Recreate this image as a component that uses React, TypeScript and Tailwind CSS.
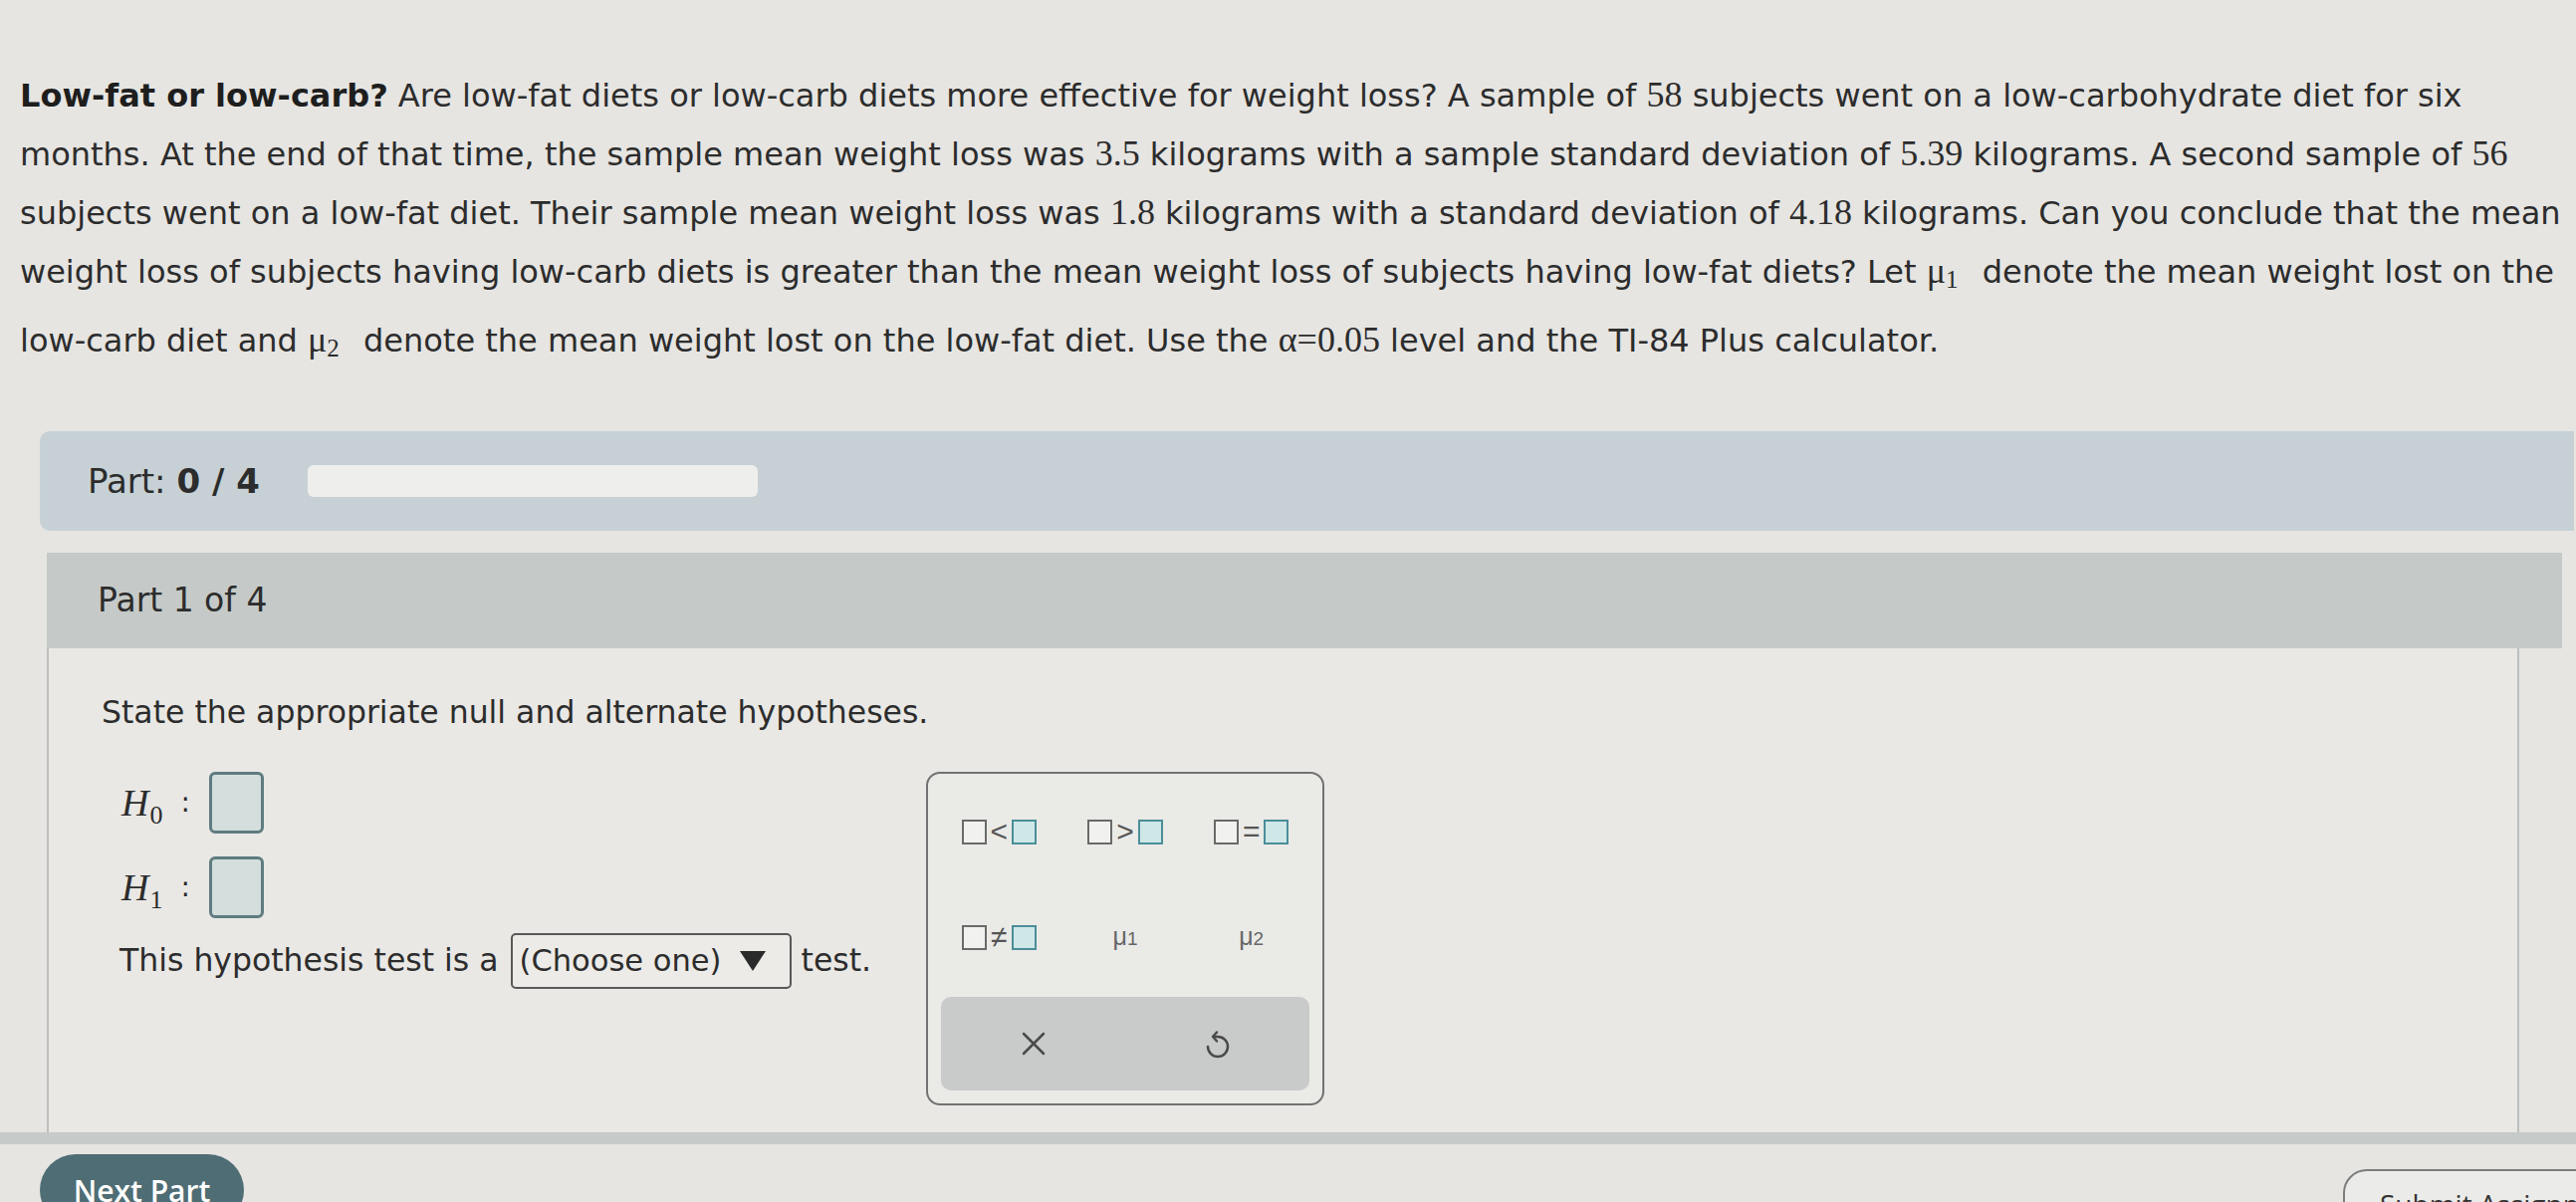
import React from 'react';

const serif = "font-['Liberation_Serif',serif]";

function Num({ children }: { children: React.ReactNode }) {
  return <span className={`${serif} text-[36px]`}>{children}</span>;
}

function Mu({ sub }: { sub: string }) {
  return (
    <span className={`${serif} text-[36px]`}>
      μ<sub className="text-[25px] relative top-[5px] mr-[14px]">{sub}</sub>
    </span>
  );
}

function Sq({ filled }: { filled?: boolean }) {
  return filled ? (
    <span className="inline-block w-[25px] h-[25px] border-2 border-[#4b8e98] bg-[#cfe7e7]" />
  ) : (
    <span className="inline-block w-[25px] h-[25px] border-2 border-[#6a6a6a] bg-[#f1f1ef]" />
  );
}

function Relation({ sym }: { sym: string }) {
  return (
    <div className="flex items-center justify-center gap-[4px] text-[#555] text-[30px] font-['Liberation_Sans',sans-serif]">
      <Sq />
      <span className="leading-none">{sym}</span>
      <Sq filled />
    </div>
  );
}

function AnswerBox() {
  return <span className="inline-block w-[55px] h-[62px] rounded-[6px] border-[3px] border-[#5f7c80] bg-[#d3dedd]" />;
}

function HLabel({ sub }: { sub: string }) {
  return (
    <div className="w-[90px] flex items-center pl-[2px]">
      <span className={`${serif} italic text-[38px]`}>H</span>
      <span className={`${serif} text-[26px] relative top-[12px] ml-[1px]`}>{sub}</span>
      <span className="ml-[18px] text-[28px]">:</span>
    </div>
  );
}

export default function App() {
  return (
    <div className="w-[2587px] h-[1207px] overflow-hidden bg-[#e6e5e2] text-[#2c2c2c] font-['DejaVu_Sans',sans-serif]">
      {/* problem statement */}
      <div className="pl-[20px] pt-[66px] text-[32px] leading-[58px] whitespace-nowrap">
        <div>
          <b className="text-[#1e1e1e]">Low-fat or low-carb?</b> Are low-fat diets or low-carb diets more effective for weight loss? A sample of <Num>58</Num> subjects went on a low-carbohydrate diet for six
        </div>
        <div>
          months. At the end of that time, the sample mean weight loss was <Num>3.5</Num> kilograms with a sample standard deviation of <Num>5.39</Num> kilograms. A second sample of <Num>56</Num>
        </div>
        <div>
          subjects went on a low-fat diet. Their sample mean weight loss was <Num>1.8</Num> kilograms with a standard deviation of <Num>4.18</Num> kilograms. Can you conclude that the mean
        </div>
        <div>
          weight loss of subjects having low-carb diets is greater than the mean weight loss of subjects having low-fat diets? Let <Mu sub="1" /> denote the mean weight lost on the
        </div>
        <div className="mt-[10px]">
          low-carb diet and <Mu sub="2" /> denote the mean weight lost on the low-fat diet. Use the <Num>α=0.05</Num> level and the TI-84 Plus calculator.
        </div>
      </div>

      {/* progress */}
      <div className="ml-[40px] mr-[2px] mt-[62px] h-[100px] rounded-l-[10px] bg-[#c7d1d5] flex items-center pl-[48px] text-[34px]">
        <span>
          Part: <b>0 / 4</b>
        </span>
        <div className="ml-[48px] w-[452px] h-[32px] rounded-[6px] bg-[#eeeeec]" />
      </div>

      {/* part panel */}
      <div className="ml-[47px] mr-[57px] mt-[22px] h-[582px] border-x-2 border-[#bcbfbe] bg-[#e9e8e5]">
        <div className="-ml-[2px] -mr-[45px] h-[96px] bg-[#c5cac8] flex items-center pl-[51px] text-[33px]">Part 1 of 4</div>
        <div className="pl-[53px] pt-[44px]">
          <div className="text-[31.5px] leading-[40px]">State the appropriate null and alternate hypotheses.</div>
          <div className="mt-[40px] pl-[18px] flex items-start">
            <div className="w-[810px] text-[31.5px]">
              <div className="h-[62px] flex items-center">
                <HLabel sub="0" />
                <AnswerBox />
              </div>
              <div className="mt-[23px] h-[62px] flex items-center">
                <HLabel sub="1" />
                <AnswerBox />
              </div>
              <div className="mt-[16px] h-[53px] flex items-center">
                <span>This hypothesis test is a</span>
                <span className="ml-[12px] h-[56px] w-[282px] inline-flex items-center border-2 border-[#585858] rounded-[5px] bg-[#ecebe8] pl-[7px] text-[30.5px]">
                  (Choose one)
                  <svg className="ml-[18px]" width="28" height="22" viewBox="0 0 28 22">
                    <polygon points="1,1 27,1 14,21" fill="#2a2a2a" />
                  </svg>
                </span>
                <span className="ml-[10px]">test.</span>
              </div>
            </div>

            {/* keypad */}
            <div className="w-[400px] h-[335px] border-2 border-[#727272] rounded-[14px] bg-[#eaeae7] px-[8px] pt-[33px]">
              <div className="grid grid-cols-3 h-[50px] items-center">
                <Relation sym="<" />
                <Relation sym=">" />
                <Relation sym="=" />
              </div>
              <div className="grid grid-cols-3 h-[50px] items-center mt-[56px]">
                <Relation sym="≠" />
                <div className="text-center text-[25px] text-[#666] font-['Liberation_Sans',sans-serif]">
                  μ<span className="text-[19px]">1</span>
                </div>
                <div className="text-center text-[25px] text-[#666] font-['Liberation_Sans',sans-serif]">
                  μ<span className="text-[19px]">2</span>
                </div>
              </div>
              <div className="mx-[5px] mt-[35px] h-[94px] rounded-[10px] bg-[#c9cbca] flex">
                <div className="flex-1 flex items-center justify-center">
                  <svg width="28" height="28" viewBox="0 0 28 28" fill="none" stroke="#4a4a4a" strokeWidth="2.5" strokeLinecap="round">
                    <path d="M4 4L24 24M24 4L4 24" />
                  </svg>
                </div>
                <div className="flex-1 flex items-center justify-center">
                  <svg width="30" height="32" viewBox="0 0 30 32" fill="none" stroke="#4a4a4a" strokeWidth="2.5" strokeLinecap="round" strokeLinejoin="round">
                    <path d="M5 19 A10 10 0 1 0 15 9 L10.5 9" />
                    <path d="M14 4.5 L10 9 L14 13.5" />
                  </svg>
                </div>
              </div>
            </div>
          </div>
        </div>
      </div>

      {/* footer */}
      <div className="h-[12px] bg-[#c6cac9]" />
      <div className="flex items-start pt-[10px]">
        <div className="ml-[40px] w-[205px] h-[72px] rounded-full bg-[#4f6d74] text-white flex items-center justify-center text-[30px] font-['Open_Sans',sans-serif] font-semibold">
          Next Part
        </div>
        <div className="ml-auto -mr-[60px] mt-[15px] w-[294px] h-[70px] border-2 border-[#7c7c7c] rounded-[24px] bg-[#ebebe9] pl-[35px] pt-[12px] text-[28px] text-[#333] font-['Open_Sans',sans-serif] whitespace-nowrap">
          Submit Assignment
        </div>
      </div>
    </div>
  );
}
